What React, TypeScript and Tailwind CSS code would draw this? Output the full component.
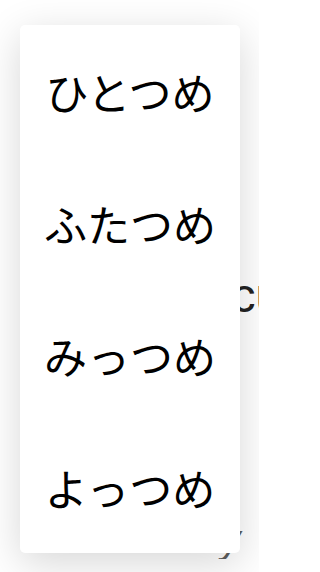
import React from "react";

const items = ["ひとつめ", "ふたつめ", "みっつめ", "よっつめ"];

export default function App() {
  return (
    <div className="relative h-[572px] w-[259px] overflow-hidden bg-white [font-family:'Liberation_Sans',Arial,sans-serif]">
      <div className="w-[259px] overflow-hidden pt-[272px] pl-[178px] whitespace-nowrap text-[48px] leading-none text-[#222]">
        docu
      </div>
      <div className="mt-[199px] w-[259px] overflow-hidden pl-[136px] whitespace-nowrap text-[40px] italic leading-none text-[#5f5f5f]">
        essay
      </div>
      <div className="absolute left-[20px] top-[25px] flex h-[528px] w-[220px] flex-col rounded-[5px] bg-white shadow-[0_10px_40px_rgba(0,0,0,0.16)]">
        {items.map((t) => (
          <div
            key={t}
            className="flex h-[132px] items-center justify-center text-[43px] leading-none text-black [font-family:'Noto_Sans_CJK_JP',sans-serif]"
          >
            {t}
          </div>
        ))}
      </div>
    </div>
  );
}
